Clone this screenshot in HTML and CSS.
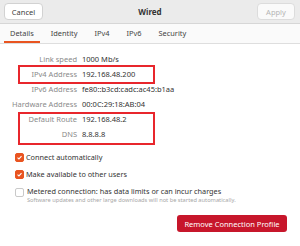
FILE: index.html
```html
<!DOCTYPE html>
<html>
<head>
<meta charset="utf-8">
<link rel="stylesheet" href="styles.css">
</head>
<body>
<div class="window">
  <div class="header">
    <button class="btn">Cancel</button>
    <div class="title">Wired</div>
    <button class="btn disabled">Apply</button>
  </div>
  <div class="tabs">
    <div class="tab active">Details</div>
    <div class="tab">Identity</div>
    <div class="tab">IPv4</div>
    <div class="tab">IPv6</div>
    <div class="tab">Security</div>
  </div>
  <div class="details">
    <div class="label">Link speed</div><div class="value">1000 Mb/s</div>
    <div class="label">IPv4 Address</div><div class="value">192.168.48.200</div>
    <div class="label">IPv6 Address</div><div class="value">fe80::b3cd:cadc:ac45:b1aa</div>
    <div class="label">Hardware Address</div><div class="value">00:0C:29:18:AB:04</div>
    <div class="label">Default Route</div><div class="value">192.168.48.2</div>
    <div class="label">DNS</div><div class="value">8.8.8.8</div>
  </div>
  <div class="checks">
    <div class="check-row">
      <span class="box checked"><svg viewBox="0 0 10 10" width="9" height="9"><path d="M2.2 5.2 L4.2 7.1 L7.9 2.9" fill="none" stroke="#fff" stroke-width="1.5"/></svg></span>
      <span class="check-text">Connect automatically</span>
    </div>
    <div class="check-row">
      <span class="box checked"><svg viewBox="0 0 10 10" width="9" height="9"><path d="M2.2 5.2 L4.2 7.1 L7.9 2.9" fill="none" stroke="#fff" stroke-width="1.5"/></svg></span>
      <span class="check-text">Make available to other users</span>
    </div>
    <div class="check-row metered">
      <span class="box"></span>
      <div class="metered-text">
        <div class="check-text">Metered connection: has data limits or can incur charges</div>
        <div class="sub">Software updates and other large downloads will not be started automatically.</div>
      </div>
    </div>
  </div>
  <div class="actions">
    <button class="remove">Remove Connection Profile</button>
  </div>
  <div class="mark mark1"></div>
  <div class="mark mark2"></div>
</div>
</body>
</html>
```
FILE: styles.css
```css
* { box-sizing: border-box; }
html, body { margin: 0; padding: 0; background: #fff; }
body { font-family: "Noto Sans", "Open Sans", sans-serif; color: #333; }
.window { position: relative; width: 300px; height: 246px; overflow: hidden; background: #fff; }
.header {
  height: 24px; background: #ebebeb; border-bottom: 1px solid #d6d6d6;
  display: flex; align-items: center; justify-content: space-between;
  padding: 0 5px 0 4px;
}
.btn {
  width: 39px; height: 17px; padding: 0; margin: 0;
  background: #fff; border: 1px solid #d2d2d2; border-radius: 4px;
  font-family: inherit; font-size: 7.5px; color: #3d3d3d;
}
.btn.disabled { color: #b5b5b5; border-color: #dcdcdc; width: 38px; background: #fafafa; }
.title { font-weight: bold; font-size: 8px; color: #333; }
.tabs {
  height: 20px; background: #fafafa; border-bottom: 1px solid #dedede;
  display: flex; padding-left: 4px; gap: 5px;
}
.tab {
  padding: 0 6px; font-size: 7.4px; color: #444; line-height: 19px;
  border-bottom: 2px solid transparent; height: 19px;
}
.tab.active { border-bottom-color: #e95420; }
.details {
  display: grid; grid-template-columns: 77px auto; column-gap: 5px;
  padding-top: 8px; font-size: 7.5px; line-height: 15px;
}
.label { text-align: right; color: #8a8a8a; white-space: nowrap; }
.value { color: #333; white-space: nowrap; }
.checks { margin-top: 7px; padding-left: 15px; }
.check-row { display: flex; align-items: center; height: 17px; gap: 2px; }
.box {
  width: 9px; height: 9px; border-radius: 2px; border: 1px solid #c9c9c9;
  background: #fff; display: flex; align-items: center; justify-content: center; flex: none;
}
.box.checked { background: #e95420; border-color: #e95420; }
.box svg { display: block; }
.check-text { font-size: 7.3px; color: #333; white-space: nowrap; line-height: 9px; }
.metered { align-items: flex-start; height: auto; padding-top: 4px; gap: 3px; }
.metered .box { margin-top: 1px; }
.sub { font-size: 5.7px; color: #a8a8a8; white-space: nowrap; line-height: 8px; }
.actions { display: flex; justify-content: flex-end; padding-right: 13px; margin-top: 11px; }
.remove {
  width: 110px; height: 17px; padding: 0; border: none; border-radius: 3px;
  background: #c7162b; color: #fff; font-family: inherit; font-size: 7.5px;
}
.mark { position: absolute; border: 2px solid #e8262c; }
.mark1 { left: 18px; top: 65px; width: 137px; height: 19px; }
.mark2 { left: 18px; top: 112px; width: 137px; height: 33px; }
```
